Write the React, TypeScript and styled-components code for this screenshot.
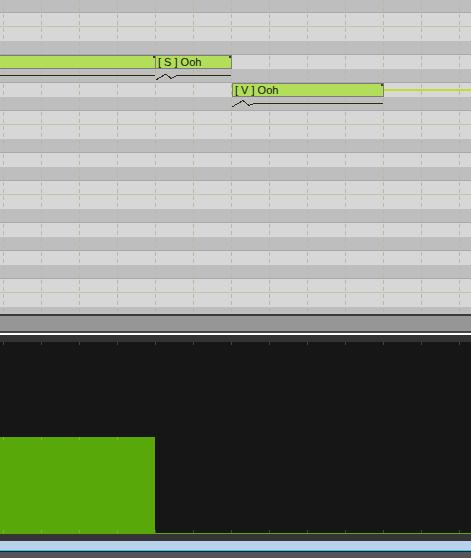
import React from 'react';
import styled, { createGlobalStyle } from 'styled-components';

// piano roll geometry
const ROW_H = 14;
const TOP_PITCH = 73;
const ROW_COUNT = 23;
const BLACK_KEYS = [1, 3, 6, 8, 10];

interface Note {
  label: string;
  pitch: number;
  left: number;
  width: number;
}

const notes: Note[] = [
  { label: '', pitch: 69, left: -20, width: 176 },
  { label: '[ S ] Ooh', pitch: 69, left: 155, width: 77 },
  { label: '[ V ] Ooh', pitch: 67, left: 232, width: 152 },
];

const rowTop = (pitch: number): number => (TOP_PITCH - pitch) * ROW_H - 1;

const GlobalStyle = createGlobalStyle`
  html, body {
    margin: 0;
    padding: 0;
    background: #555555;
  }
`;

const App: React.FC = () => {
  const rows = Array.from({ length: ROW_COUNT }, (_, i) => TOP_PITCH - i);

  return (
    <>
      <GlobalStyle />
      <Page>
        <PianoRoll>
          <Keys>
            {rows.map((pitch) => {
              const pc = pitch % 12;
              return (
                <KeyRow
                  key={pitch}
                  $black={BLACK_KEYS.includes(pc)}
                  $octave={pc === 0 || pc === 5}
                />
              );
            })}
          </Keys>
          <GridLines />
          <PitchCurves width="471" height="314">
            <polyline points="0,75.5 155,75.5" />
            <polyline points="156,80 166,74 171,78.5 177,75.5 231,75.5" />
            <polyline points="232,107 243,100.5 249,105.5 254,103.5 383,103.5" />
            <line className="tail" x1="384" y1="90" x2="471" y2="90" />
          </PitchCurves>
          {notes.map((n, i) => (
            <NoteBox
              key={i}
              style={{ left: n.left, top: rowTop(n.pitch), width: n.width }}
            >
              {n.label}
            </NoteBox>
          ))}
        </PianoRoll>

        <Band $h={2} $c="#3a3a3a" />
        <Band $h={15} $c="#969696" />
        <Band $h={2} $c="#444444" />
        <Band $h={2} $c="#ffffff" />
        <Band $h={7} $c="#333333" />

        <ControlTrack>
          <TickRow $edge="top" />
          <ValueBar style={{ width: 155, height: 97 }} />
          <Baseline />
          <TickRow $edge="bottom" />
        </ControlTrack>

        <Band $h={7} $c="#353535" />
        <Band $h={9} $c="#b9d1ed" />
        <Band $h={1} $c="#1fd0f2" />
        <Band $h={1} $c="#1a1a1a" />
        <Band $h={6} $c="#555555" />
      </Page>
    </>
  );
};

export default App;

const Page = styled.div`
  width: 471px;
  height: 558px;
  display: flex;
  flex-direction: column;
  overflow: hidden;
  background: #555555;
`;

const PianoRoll = styled.div`
  position: relative;
  height: 314px;
  flex: none;
  overflow: hidden;
  background: #d7d7d7;
`;

const Keys = styled.div`
  display: flex;
  flex-direction: column;
  margin-top: -1px;
`;

const KeyRow = styled.div<{ $black: boolean; $octave: boolean }>`
  height: ${ROW_H}px;
  box-sizing: border-box;
  flex: none;
  background: ${(p) => (p.$black ? '#bebebe' : '#d7d7d7')};
  border-bottom: 1px solid
    ${(p) => (p.$black ? '#a9a9a9' : p.$octave ? '#c5c1a2' : '#d7d7d7')};
`;

const GridLines = styled.div`
  position: absolute;
  inset: 0;
  pointer-events: none;
  background-image: linear-gradient(
    to right,
    transparent 3px,
    #b9b8a0 3px,
    #b9b8a0 4px,
    transparent 4px
  );
  background-size: 38px 100%;
  -webkit-mask-image: linear-gradient(to bottom, #000 4px, transparent 4px);
  -webkit-mask-size: 100% 7px;
  mask-image: linear-gradient(to bottom, #000 4px, transparent 4px);
  mask-size: 100% 7px;
`;

const PitchCurves = styled.svg`
  position: absolute;
  left: 0;
  top: 0;
  pointer-events: none;
  shape-rendering: crispEdges;

  polyline {
    fill: none;
    stroke: #2b2a12;
    stroke-width: 1;
  }

  .tail {
    stroke: #c4dc2c;
    stroke-width: 2;
  }
`;

const NoteBox = styled.div`
  position: absolute;
  height: ${ROW_H}px;
  box-sizing: border-box;
  padding-left: 2px;
  background: #b3de5a;
  border: 1px solid #7c7c7c;
  color: #111111;
  font-family: 'Liberation Sans', Arial, sans-serif;
  font-size: 11px;
  line-height: 12px;
  white-space: nowrap;
  overflow: hidden;

  &::after {
    content: '';
    position: absolute;
    right: 0;
    top: 0;
    width: 2px;
    height: 2px;
    background: #3a3a3a;
  }
`;

const Band = styled.div<{ $h: number; $c: string }>`
  height: ${(p) => p.$h}px;
  flex: none;
  background: ${(p) => p.$c};
`;

const ControlTrack = styled.div`
  position: relative;
  height: 192px;
  flex: none;
  display: flex;
  align-items: flex-end;
  background: #161616;
`;

const ticks = `linear-gradient(
  to right,
  transparent 3px,
  rgba(255, 255, 255, 0.2) 3px,
  rgba(255, 255, 255, 0.2) 4px,
  transparent 4px
)`;

const ValueBar = styled.div`
  flex: none;
  background: ${ticks} 0 0 / 38px 3px repeat-x, #58a80a;
`;

const Baseline = styled.div`
  flex: 1;
  height: 1px;
  background: #58a80a;
`;

const TickRow = styled.div<{ $edge: 'top' | 'bottom' }>`
  position: absolute;
  left: 0;
  right: 0;
  ${(p) => (p.$edge === 'top' ? 'top: 0;' : 'bottom: 1px;')}
  height: ${(p) => (p.$edge === 'top' ? 3 : 3)}px;
  pointer-events: none;
  background: ${ticks} 0 0 / 38px 100% repeat-x;
`;
